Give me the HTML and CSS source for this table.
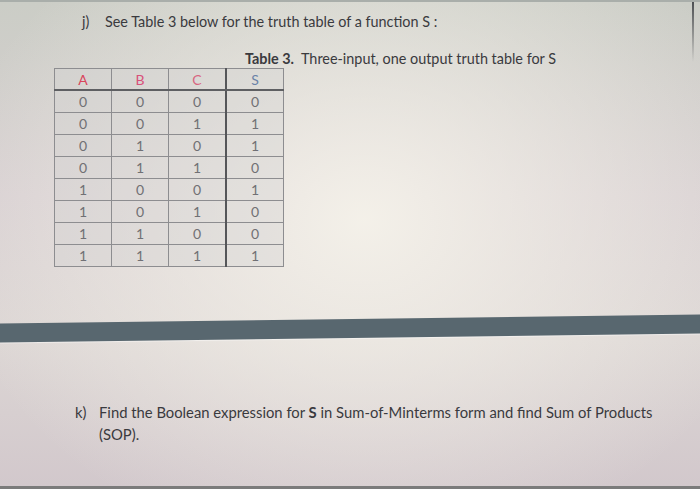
FILE: index.html
```html
<!DOCTYPE html>
<html>
<head>
<meta charset="utf-8">
<link rel="stylesheet" href="styles.css">
</head>
<body>
<div class="screen">
  <div class="top">
    <p class="q q-j"><span class="lbl">j)</span><span>See Table 3 below for the truth table of a function S :</span></p>
    <p class="caption"><b>Table 3.</b>&nbsp; Three-input, one output truth table for S</p>
    <table class="tt">
      <thead>
        <tr><th class="ha">A</th><th class="hb">B</th><th class="hc">C</th><th class="hs">S</th></tr>
      </thead>
      <tbody>
        <tr><td>0</td><td>0</td><td>0</td><td>0</td></tr>
        <tr><td>0</td><td>0</td><td>1</td><td>1</td></tr>
        <tr><td>0</td><td>1</td><td>0</td><td>1</td></tr>
        <tr><td>0</td><td>1</td><td>1</td><td>0</td></tr>
        <tr><td>1</td><td>0</td><td>0</td><td>1</td></tr>
        <tr><td>1</td><td>0</td><td>1</td><td>0</td></tr>
        <tr><td>1</td><td>1</td><td>0</td><td>0</td></tr>
        <tr><td>1</td><td>1</td><td>1</td><td>1</td></tr>
      </tbody>
    </table>
  </div>
  <div class="band"></div>
  <div class="bottom">
    <div class="q q-k">
      <span class="lbl">k)</span>
      <div class="txt">
        <div class="ln">Find the Boolean expression for <b>S</b> in Sum-of-Minterms form and find Sum of Products</div>
        <div class="ln">(SOP).</div>
      </div>
    </div>
  </div>
</div>
</body>
</html>
```
FILE: styles.css
```css
html, body {
  margin: 0;
  padding: 0;
}
body {
  width: 700px;
  height: 489px;
  overflow: hidden;
  font-family: Lato, "Open Sans", sans-serif;
  color: #3a3a3e;
}
.screen {
  position: relative;
  width: 700px;
  height: 489px;
  box-sizing: border-box;
  border-top: 2px solid #a9aeaa;
  border-bottom: 3px solid #7b7b7b;
  background:
    radial-gradient(ellipse 60% 70% at 52% 45%, rgba(245,242,234,0.95), rgba(245,242,234,0) 100%),
    linear-gradient(180deg, #cbcdc6 0%, #d8d0d2 40%, #dcd6d4 70%, #d2c8cc 100%);
  display: flex;
  flex-direction: column;
}
.screen::after {
  content: "";
  position: absolute;
  top: 0;
  right: 6px;
  width: 2px;
  height: 60px;
  background: linear-gradient(180deg, #4d4f52, rgba(120,120,120,0));
}
.top {
  padding: 11px 0 0 54px;
  height: 296px;
  box-sizing: border-box;
}
.q {
  margin: 0;
  font-size: 14.4px;
  display: flex;
}
.q-j {
  margin-left: 28px;
}
.q-j .lbl {
  width: 23px;
}
.caption {
  margin: 20px 0 1px 191px;
  font-size: 14.4px;
}
.caption b {
  font-weight: 700;
}
.tt {
  border-collapse: collapse;
  background: rgba(210,208,210,0.35);
  font-size: 14px;
  color: #707074;
}
.tt th, .tt td {
  border: 1px solid #8d8d90;
  width: 56px;
  height: 21px;
  padding: 0;
  text-align: center;
  font-weight: 400;
}
.tt th {
  height: 20px;
  border-bottom: 2px solid #5e5f62;
  font-size: 14px;
}
.tt th:nth-child(3), .tt td:nth-child(3) {
  border-right: 2px solid #555659;
}
.ha { color: #d9455b; }
.hb { color: #d8507a; }
.hc { color: #d86680; }
.hs { color: #6a82a8; }
.band {
  height: 19px;
  margin-top: 21px;
  background: #58676f;
  transform: skewY(-0.75deg);
  box-shadow: 0 1px 1px rgba(255,255,255,0.5);
}
.bottom {
  padding: 63px 30px 0 75px;
}
.q-k {
  line-height: 22px;
  font-size: 14.8px;
}
.q-k .lbl {
  width: 24px;
  flex: none;
}
.q-k .txt {
  flex: none;
  width: 570px;
}
.ln {
  white-space: nowrap;
}
```
